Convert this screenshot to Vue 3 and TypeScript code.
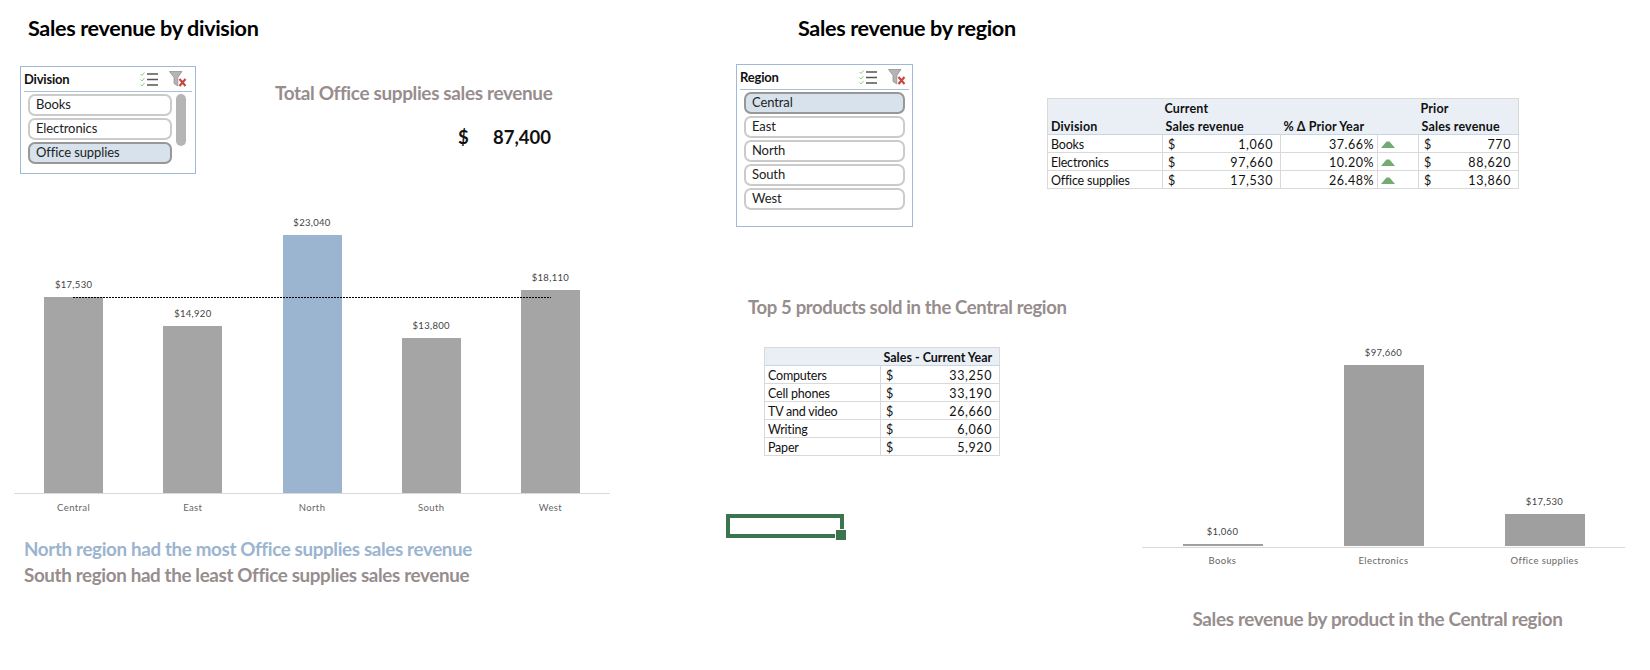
<script setup lang="ts">
interface Bar {
  name: string
  value: number
  highlight?: boolean
}

const money = (n: number): string => '$' + n.toLocaleString('en-US')
const num = (n: number): string => n.toLocaleString('en-US')

const regionBars: Bar[] = [
  { name: 'Central', value: 17530 },
  { name: 'East', value: 14920 },
  { name: 'North', value: 23040, highlight: true },
  { name: 'South', value: 13800 },
  { name: 'West', value: 18110 },
]
const productBars: Bar[] = [
  { name: 'Books', value: 1060 },
  { name: 'Electronics', value: 97660 },
  { name: 'Office supplies', value: 17530 },
]

const regionScale = 258 / 23040
const productScale = 181 / 97660

const divisions = ['Books', 'Electronics', 'Office supplies']
const regions = ['Central', 'East', 'North', 'South', 'West']

const divisionRows = [
  { name: 'Books', current: 1060, pct: '37.66%', prior: 770 },
  { name: 'Electronics', current: 97660, pct: '10.20%', prior: 88620 },
  { name: 'Office supplies', current: 17530, pct: '26.48%', prior: 13860 },
]
const topProducts = [
  { name: 'Computers', sales: 33250 },
  { name: 'Cell phones', sales: 33190 },
  { name: 'TV and video', sales: 26660 },
  { name: 'Writing', sales: 6060 },
  { name: 'Paper', sales: 5920 },
]
</script>

<template>
  <div class="sheet">
    <section class="left">
      <h2 class="title title-division">Sales revenue by division</h2>

      <div class="top-row">
        <div class="slicer slicer-division">
          <div class="slicer-head">
            <span class="slicer-name">Division</span>
            <svg class="icon-multi" width="18" height="15" viewBox="0 0 18 15">
              <path d="M0.5 2l1.5 1.5L4.5 0.5M0.5 7.5L2 9l2.5-3M0.5 12.5L2 14l2.5-3" fill="none" stroke="#93cc82" stroke-width="1" />
              <path d="M7 2h11M7 7.5h11M7 13h11" stroke="#555" stroke-width="1.4" />
            </svg>
            <svg class="icon-clear" width="18" height="16" viewBox="0 0 18 16">
              <path d="M0.5 0.5h12.5L8.8 6.5v8.5L5 12.5V6.5z" fill="#b4b4b4" stroke="#8a8a8a" stroke-width="0.7" />
              <path d="M10.5 8l6 7M16.5 8l-6 7" stroke="#c9453c" stroke-width="2.1" />
            </svg>
          </div>
          <div class="slicer-body">
            <ul class="slicer-list">
              <li v-for="d in divisions" :key="d" class="slicer-item" :class="{ selected: d === 'Office supplies' }">{{ d }}</li>
            </ul>
            <div class="scrollbar"></div>
          </div>
        </div>

        <div class="total">
          <div class="total-label">Total Office supplies sales revenue</div>
          <div class="total-amount"><span>$</span><span>87,400</span></div>
        </div>
      </div>

      <div class="chart chart-region">
        <div class="plot">
          <div v-for="b in regionBars" :key="b.name" class="bar-col">
            <span class="bar-value">{{ money(b.value) }}</span>
            <div class="bar" :class="{ blue: b.highlight }" :style="{ height: b.value * regionScale + 'px' }"></div>
          </div>
          <div class="avg-line"></div>
        </div>
        <div class="cats">
          <span v-for="b in regionBars" :key="b.name">{{ b.name }}</span>
        </div>
      </div>

      <p class="insight blue-text">North region had the most Office supplies sales revenue</p>
      <p class="insight grey-text">South region had the least Office supplies sales revenue</p>
    </section>

    <section class="right">
      <h2 class="title title-region">Sales revenue by region</h2>

      <div class="upper">
        <div class="slicer slicer-region">
          <div class="slicer-head">
            <span class="slicer-name">Region</span>
            <svg class="icon-multi" width="18" height="15" viewBox="0 0 18 15">
              <path d="M0.5 2l1.5 1.5L4.5 0.5M0.5 7.5L2 9l2.5-3M0.5 12.5L2 14l2.5-3" fill="none" stroke="#93cc82" stroke-width="1" />
              <path d="M7 2h11M7 7.5h11M7 13h11" stroke="#555" stroke-width="1.4" />
            </svg>
            <svg class="icon-clear" width="18" height="16" viewBox="0 0 18 16">
              <path d="M0.5 0.5h12.5L8.8 6.5v8.5L5 12.5V6.5z" fill="#b4b4b4" stroke="#8a8a8a" stroke-width="0.7" />
              <path d="M10.5 8l6 7M16.5 8l-6 7" stroke="#c9453c" stroke-width="2.1" />
            </svg>
          </div>
          <ul class="slicer-list">
            <li v-for="r in regions" :key="r" class="slicer-item" :class="{ selected: r === 'Central' }">{{ r }}</li>
          </ul>
        </div>

        <table class="grid grid-division">
          <colgroup>
            <col style="width: 115px" />
            <col style="width: 118px" />
            <col style="width: 97px" />
            <col style="width: 41px" />
            <col style="width: 100px" />
          </colgroup>
          <thead>
            <tr>
              <th></th>
              <th class="shift-up">Current</th>
              <th></th>
              <th></th>
              <th class="shift-up">Prior</th>
            </tr>
            <tr class="head-last">
              <th>Division</th>
              <th>Sales revenue</th>
              <th>% Δ Prior Year</th>
              <th></th>
              <th>Sales revenue</th>
            </tr>
          </thead>
          <tbody>
            <tr v-for="row in divisionRows" :key="row.name">
              <td>{{ row.name }}</td>
              <td><div class="acct"><span>$</span><span>{{ num(row.current) }}</span></div></td>
              <td class="pct">{{ row.pct }}</td>
              <td class="arrow-cell">
                <svg width="14" height="7" viewBox="0 0 14 7"><path d="M5.5 0.5h3L14 7H0z" fill="#74ab72" /></svg>
              </td>
              <td><div class="acct"><span>$</span><span>{{ num(row.prior) }}</span></div></td>
            </tr>
          </tbody>
        </table>
      </div>

      <div class="lower">
        <div class="lower-left">
          <h3 class="subhead">Top 5 products sold in the Central region</h3>
          <table class="grid grid-products">
            <colgroup>
              <col style="width: 116px" />
              <col style="width: 119px" />
            </colgroup>
            <thead>
              <tr class="head-last">
                <th></th>
                <th class="align-right">Sales - Current Year</th>
              </tr>
            </thead>
            <tbody>
              <tr v-for="p in topProducts" :key="p.name">
                <td>{{ p.name }}</td>
                <td><div class="acct"><span>$</span><span>{{ num(p.sales) }}</span></div></td>
              </tr>
            </tbody>
          </table>
          <div class="cell-cursor"><span class="cursor-handle"></span></div>
        </div>

        <div class="lower-right">
          <div class="chart chart-product">
            <div class="plot">
              <div v-for="b in productBars" :key="b.name" class="bar-col">
                <span class="bar-value">{{ money(b.value) }}</span>
                <div class="bar" :style="{ height: b.value * productScale + 'px' }"></div>
              </div>
            </div>
            <div class="cats">
              <span v-for="b in productBars" :key="b.name">{{ b.name }}</span>
            </div>
          </div>
          <h3 class="chart-caption">Sales revenue by product in the Central region</h3>
        </div>
      </div>
    </section>
  </div>
</template>

<style>
html,
body {
  margin: 0;
  background: #fff;
}
</style>

<style scoped>
.sheet {
  width: 1650px;
  height: 670px;
  display: flex;
  overflow: hidden;
  background: #fff;
  font-family: Lato, "Liberation Sans", sans-serif;
  color: #111;
}

.left {
  width: 700px;
  flex: none;
}

.right {
  width: 950px;
  flex: none;
}

.title {
  margin: 14px 0 0;
  font-size: 21.6px;
  line-height: 28px;
  font-weight: 700;
  letter-spacing: -0.35px;
  color: #000;
}

.title-division {
  padding-left: 28px;
}

.title-region {
  padding-left: 98px;
}

.top-row {
  display: flex;
  margin: 24px 0 0 20px;
}

.slicer {
  box-sizing: border-box;
  flex: none;
  border: 1px solid #9fbad8;
  background: #fff;
  padding: 0 3px;
}

.slicer-division {
  width: 176px;
  height: 108px;
}

.slicer-region {
  width: 177px;
  height: 163px;
  margin-left: 36px;
}

.slicer-head {
  height: 24px;
  display: flex;
  align-items: center;
  border-bottom: 1px solid #a9c0da;
  margin-bottom: 2px;
}

.slicer-name {
  flex: 1;
  font-size: 13px;
  font-weight: 700;
  letter-spacing: -0.2px;
  color: #111;
}

.icon-multi {
  margin-right: 11px;
}

.slicer-division .icon-clear {
  margin-right: 5px;
}

.slicer-region .icon-clear {
  margin-right: 3px;
}

.slicer-body {
  display: flex;
  gap: 4px;
}

.slicer-list {
  flex: 1;
  list-style: none;
  margin: 0;
  padding: 0 0 0 4px;
  display: flex;
  flex-direction: column;
  gap: 2px;
}

.slicer-region .slicer-list {
  padding-right: 4px;
}

.slicer-item {
  box-sizing: border-box;
  height: 22px;
  line-height: 17px;
  padding-left: 6px;
  border: 2px solid #cbcbcb;
  border-radius: 7px;
  font-size: 13px;
  letter-spacing: -0.1px;
  color: #222;
  background: #fff;
}

.slicer-item.selected {
  border-color: #979797;
  background: #d7e2ed;
}

.scrollbar {
  width: 10px;
  height: 52px;
  flex: none;
  border-radius: 5px;
  background: #b5b5b5;
  margin-right: 6px;
}

.total {
  width: 276px;
  margin-left: 79px;
  padding-top: 15px;
}

.total-label {
  font-size: 18.95px;
  line-height: 24px;
  font-weight: 700;
  letter-spacing: -0.35px;
  color: #978d8d;
  white-space: nowrap;
}

.total-amount {
  display: flex;
  justify-content: space-between;
  margin: 18px 0 0 183px;
  font-size: 18.5px;
  line-height: 28px;
  font-weight: 700;
  color: #111;
}

.chart-region {
  width: 596px;
  margin: 19px 0 0 14px;
}

.plot {
  position: relative;
  display: flex;
  align-items: flex-end;
  border-bottom: 1px solid #d9d9d9;
}

.chart-region .plot {
  height: 300px;
}

.bar-col {
  flex: 1;
  display: flex;
  flex-direction: column;
  align-items: center;
}

.bar-value {
  font-size: 9.5px;
  line-height: 14px;
  margin-bottom: 5px;
  color: #444;
  letter-spacing: 0.3px;
}

.bar {
  background: #a5a5a5;
}

.chart-region .bar {
  width: 59px;
}

.bar.blue {
  background: #9bb4cf;
}

.avg-line {
  position: absolute;
  left: 59px;
  bottom: 195px;
  width: 478px;
  height: 1.5px;
  background: repeating-linear-gradient(90deg, #000 0 2px, transparent 2px 3px);
}

.cats {
  display: flex;
  margin-top: 7px;
}

.cats span {
  flex: 1;
  text-align: center;
  font-size: 9.5px;
  line-height: 14px;
  letter-spacing: 0.4px;
  color: #666;
}

.insight {
  margin: 0;
  padding-left: 24px;
  font-size: 18.8px;
  line-height: 26px;
  font-weight: 700;
  letter-spacing: -0.35px;
  white-space: nowrap;
}

.blue-text {
  margin-top: 21px;
  color: #9bb4cf;
}

.grey-text {
  color: #978d8d;
}

.upper {
  display: flex;
  align-items: flex-start;
  margin-top: 22px;
}

.grid {
  border-collapse: collapse;
  table-layout: fixed;
  font-size: 12.5px;
  color: #111;
}

.grid-division {
  width: 471px;
  margin: 34px 0 0 134px;
}

.grid th,
.grid td {
  box-sizing: border-box;
  height: 18px;
  padding: 2px 3px 0;
  line-height: 15px;
  white-space: nowrap;
  overflow: hidden;
}

.grid th {
  background: #e9eff5;
  text-align: left;
  font-weight: 700;
  letter-spacing: 0.15px;
}

.grid thead tr:first-child th {
  border-top: 1px solid #d9d9d9;
}

.grid th:first-child,
.grid td:first-child {
  border-left: 1px solid #d9d9d9;
}

.grid th:last-child,
.grid td:last-child {
  border-right: 1px solid #d9d9d9;
}

.grid .head-last th {
  border-bottom: 1px solid #c4d6e8;
}

.grid td {
  border: 1px solid #d9d9d9;
  letter-spacing: -0.2px;
}

.acct {
  display: flex;
  justify-content: space-between;
  padding: 0 4px 0 2px;
  letter-spacing: 0.6px;
}

.pct {
  text-align: right;
  letter-spacing: 0.5px !important;
}

.arrow-cell {
  line-height: 0 !important;
}

.arrow-cell svg {
  display: block;
}

.align-right {
  text-align: right !important;
  padding-right: 7px !important;
  letter-spacing: 0 !important;
}

.shift-up {
  padding-left: 2px !important;
}

.lower {
  display: flex;
}

.lower-left {
  width: 442px;
  flex: none;
}

.subhead {
  margin: 68px 0 0 48px;
  font-size: 18.5px;
  line-height: 24px;
  font-weight: 700;
  letter-spacing: -0.35px;
  color: #978d8d;
  white-space: nowrap;
}

.grid-products {
  width: 235px;
  margin: 28px 0 0 64px;
}

.cell-cursor {
  position: relative;
  box-sizing: border-box;
  width: 118px;
  height: 24px;
  margin: 58px 0 0 26px;
  border: 4px solid #3a7550;
}

.cursor-handle {
  position: absolute;
  right: -7px;
  bottom: -7px;
  width: 12px;
  height: 12px;
  background: #3a7550;
  border: 1px solid #fff;
  box-sizing: border-box;
}

.lower-right {
  width: 483px;
  flex: none;
}

.chart-product {
  margin-top: 120px;
}

.chart-product .plot {
  height: 200px;
}

.chart-product .bar {
  width: 80px;
  margin-bottom: 1px;
  background: #9f9f9f;
}

.chart-product .cats {
  margin-top: 6px;
}

.chart-caption {
  margin: 39px 12px 0 0;
  text-align: center;
  font-size: 18.9px;
  line-height: 24px;
  font-weight: 700;
  letter-spacing: -0.35px;
  color: #978d8d;
  white-space: nowrap;
}
</style>
